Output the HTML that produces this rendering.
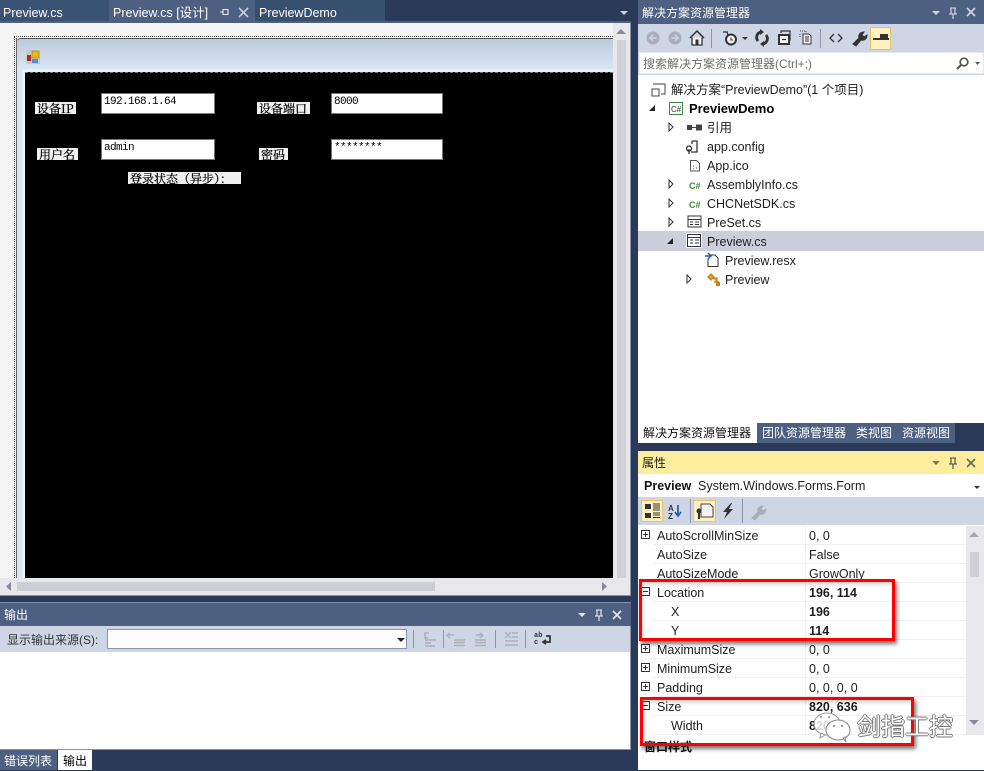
<!DOCTYPE html>
<html lang="zh">
<head>
<meta charset="utf-8">
<style>
html,body{margin:0;padding:0;background:#2b3a58;}
body{position:relative;width:984px;height:770px;overflow:hidden;font-family:"Liberation Sans","Noto Sans CJK SC",sans-serif;font-size:12.5px;color:#1e1e1e;}
.b{position:absolute;}
.t{position:absolute;white-space:nowrap;line-height:20px;height:20px;margin-top:1px;}
.w{color:#fff;}
.h{font-size:12px;}
.bold{font-weight:bold;}
.lb{position:absolute;background:#f0f0f0;color:#000;font:12px/14px "Noto Serif CJK SC","Liberation Serif",serif;height:12px;white-space:nowrap;overflow:hidden;padding-left:2px;box-sizing:border-box;-webkit-text-stroke:.25px #000;}
.tb{position:absolute;background:#fff;border:1px solid #777;box-sizing:border-box;height:21px;color:#000;font:11px/17px "Liberation Mono",monospace;letter-spacing:-.6px;padding-left:2px;}
.row{position:absolute;left:653px;width:313px;height:18px;border-bottom:1px solid #f0f0f0;}
.red{position:absolute;border:3px solid #f00;box-sizing:border-box;box-shadow:2px 3px 4px rgba(0,0,0,.55),inset 2px 3px 3px rgba(0,0,0,.14);}
svg{position:absolute;left:0;top:0;}
</style>
</head>
<body>
<!-- document tabs -->
<div class="b" style="left:0;top:0;width:109px;height:21px;background:#3a5274"></div>
<div class="b" style="left:109px;top:0;width:146px;height:23px;background:#4d6082"></div>
<div class="b" style="left:255px;top:0;width:130px;height:21px;background:#37506f"></div>
<div class="b" style="left:0;top:21px;width:631px;height:2px;background:#4d6082"></div>
<div class="t w" style="left:3px;top:2px">Preview.cs</div>
<div class="t w" style="left:113px;top:2px">Preview.cs [设计]</div>
<div class="t w" style="left:259px;top:2px">PreviewDemo</div>

<!-- designer -->
<div class="b" style="left:0;top:23px;width:631px;height:573px;background:#f5f5f5;border-right:1px solid #8092ad;box-sizing:border-box"></div>
<div class="b" style="left:14px;top:36px;width:599px;border-top:1px dotted #555"></div>
<div class="b" style="left:14px;top:36px;height:542px;border-left:1px dotted #555"></div>
<div class="b" style="left:16px;top:38px;width:597px;height:31px;border-top:1px solid #555;border-top-left-radius:5px;box-sizing:border-box;background:linear-gradient(#bccbda,#d9e6f3)"></div>
<div class="b" style="left:16px;top:38px;width:1px;height:540px;background:#666"></div>
<div class="b" style="left:17px;top:69px;width:596px;height:3px;background:#e9f1f9"></div>
<div class="b" style="left:17px;top:69px;width:8px;height:509px;background:#d9e6f3"></div>
<div class="b" style="left:23px;top:70px;width:2px;height:508px;background:#f2f7fb"></div>
<div class="b" style="left:25px;top:72px;width:588px;height:506px;background:#000;border-top:1px dashed #777;box-sizing:border-box"></div>

<div class="lb" style="left:35px;top:102px;width:41px">设备IP</div>
<div class="lb" style="left:257px;top:102px;width:53px">设备端口</div>
<div class="lb" style="left:37px;top:148px;width:41px">用户名</div>
<div class="lb" style="left:259px;top:148px;width:29px">密码</div>
<div class="lb" style="left:128px;top:172px;width:113px">登录状态（异步）：</div>
<div class="tb" style="left:101px;top:93px;width:114px">192.168.1.64</div>
<div class="tb" style="left:331px;top:93px;width:112px">8000</div>
<div class="tb" style="left:101px;top:139px;width:114px">admin</div>
<div class="tb" style="left:331px;top:139px;width:112px">********</div>

<!-- designer scrollbars -->
<div class="b" style="left:613px;top:23px;width:17px;height:573px;background:#e8e8ec"></div>
<div class="b" style="left:617px;top:40px;width:9px;height:538px;background:#d0d1d7"></div>
<div class="b" style="left:0;top:578px;width:630px;height:17px;background:#e8e8ec"></div>
<div class="b" style="left:17px;top:582px;width:418px;height:9px;background:#cdced3"></div>
<div class="b" style="left:0;top:595px;width:631px;height:1px;background:#8092ad"></div>

<!-- output panel -->
<div class="b" style="left:0;top:602px;width:631px;height:148px;background:#fff;border-right:1px solid #8092ad;box-sizing:border-box"></div>
<div class="b" style="left:0;top:602px;width:631px;height:24px;background:#4d6082;border-top:1px solid #8092ad;box-sizing:border-box"></div>
<div class="b" style="left:0;top:626px;width:630px;height:26px;background:#ced5e5"></div>
<div class="t w h" style="left:4px;top:604px">输出</div>
<div class="t h" style="left:7px;top:629px;color:#333">显示输出来源(S):</div>
<div class="b" style="left:107px;top:629px;width:300px;height:20px;background:#fdfdfd;border:1px solid #8a96ad;box-sizing:border-box"></div>
<div class="b" style="left:0;top:749px;width:631px;height:1px;background:#8092ad"></div>
<div class="b" style="left:0;top:750px;width:57px;height:20px;background:#4d6082"></div>
<div class="b" style="left:58px;top:750px;width:34px;height:20px;background:#fff"></div>
<div class="t w h" style="left:4px;top:750px">错误列表</div>
<div class="t h" style="left:63px;top:750px;color:#000">输出</div>

<!-- solution explorer -->
<div class="b" style="left:638px;top:0;width:346px;height:24px;background:#4d6082"></div>
<div class="t w h" style="left:642px;top:2px">解决方案资源管理器</div>
<div class="b" style="left:638px;top:24px;width:346px;height:28px;background:#ced5e5"></div>
<div class="b" style="left:638px;top:52px;width:346px;height:23px;background:#ced5e5"></div>
<div class="b" style="left:639px;top:52px;width:345px;height:22px;background:#fff;border:1px solid #e6e9f1;box-sizing:border-box"></div>
<div class="t h" style="left:643px;top:53px;color:#6e6e6e">搜索解决方案资源管理器(Ctrl+;)</div>
<div class="b" style="left:870px;top:27px;width:21px;height:23px;background:#fff0c0;border:1px solid #e5c365;box-sizing:border-box"></div>
<div class="b" style="left:638px;top:75px;width:346px;height:348px;background:#fff"></div>
<div class="b" style="left:638px;top:231px;width:346px;height:20px;background:#ccceDB"></div>
<div class="t" style="left:671px;top:79px">解决方案“PreviewDemo”(1 个项目)</div>
<div class="t bold" style="left:689px;top:98px;font-size:13px;color:#000">PreviewDemo</div>
<div class="t" style="left:707px;top:117px">引用</div>
<div class="t" style="left:707px;top:136px">app.config</div>
<div class="t" style="left:707px;top:155px">App.ico</div>
<div class="t" style="left:707px;top:174px">AssemblyInfo.cs</div>
<div class="t" style="left:707px;top:193px">CHCNetSDK.cs</div>
<div class="t" style="left:707px;top:212px">PreSet.cs</div>
<div class="t" style="left:707px;top:231px">Preview.cs</div>
<div class="t" style="left:725px;top:250px">Preview.resx</div>
<div class="t" style="left:725px;top:269px">Preview</div>

<!-- solution tabs -->
<div class="b" style="left:638px;top:423px;width:119px;height:20px;background:#fff"></div>
<div class="b" style="left:757px;top:423px;width:198px;height:20px;background:#4d6082"></div>
<div class="t h" style="left:643px;top:422px;color:#111">解决方案资源管理器</div>
<div class="t w h" style="left:762px;top:422px">团队资源管理器</div>
<div class="t w h" style="left:856px;top:422px">类视图</div>
<div class="t w h" style="left:902px;top:422px">资源视图</div>

<!-- properties -->
<div class="b" style="left:638px;top:451px;width:346px;height:23px;background:#fcee9e"></div>
<div class="t h" style="left:642px;top:452px;color:#222">属性</div>
<div class="b" style="left:638px;top:474px;width:346px;height:296px;background:#fff"></div>
<div class="t bold" style="left:644px;top:475px;color:#111">Preview</div>
<div class="t" style="left:698px;top:475px">System.Windows.Forms.Form</div>
<div class="b" style="left:638px;top:497px;width:346px;height:28px;background:#ced5e5"></div>
<div class="b" style="left:641px;top:500px;width:22px;height:22px;background:#fff0c0;border:1px solid #e5c365;box-sizing:border-box"></div>
<div class="b" style="left:693px;top:500px;width:23px;height:22px;background:#fff0c0;border:1px solid #e5c365;box-sizing:border-box"></div>

<div class="row" style="top:526px"></div>
<div class="row" style="top:545px"></div>
<div class="row" style="top:564px"></div>
<div class="row" style="top:583px"></div>
<div class="row" style="top:602px"></div>
<div class="row" style="top:621px"></div>
<div class="row" style="top:640px"></div>
<div class="row" style="top:659px"></div>
<div class="row" style="top:678px"></div>
<div class="row" style="top:697px"></div>
<div class="row" style="top:716px"></div>
<div class="b" style="left:805px;top:526px;width:1px;height:209px;background:#f0f0f0"></div>
<div class="b" style="left:966px;top:526px;width:18px;height:209px;background:#e8e8ec"></div>
<div class="b" style="left:970px;top:552px;width:9px;height:25px;background:#d0d1d7"></div>

<div class="t" style="left:657px;top:525px">AutoScrollMinSize</div><div class="t" style="left:809px;top:525px">0, 0</div>
<div class="t" style="left:657px;top:544px">AutoSize</div><div class="t" style="left:809px;top:544px">False</div>
<div class="t" style="left:657px;top:563px">AutoSizeMode</div><div class="t" style="left:809px;top:563px">GrowOnly</div>
<div class="t" style="left:657px;top:582px">Location</div><div class="t bold" style="left:809px;top:582px">196, 114</div>
<div class="t" style="left:671px;top:601px">X</div><div class="t bold" style="left:809px;top:601px">196</div>
<div class="t" style="left:671px;top:620px">Y</div><div class="t bold" style="left:809px;top:620px">114</div>
<div class="t" style="left:657px;top:639px">MaximumSize</div><div class="t" style="left:809px;top:639px">0, 0</div>
<div class="t" style="left:657px;top:658px">MinimumSize</div><div class="t" style="left:809px;top:658px">0, 0</div>
<div class="t" style="left:657px;top:677px">Padding</div><div class="t" style="left:809px;top:677px">0, 0, 0, 0</div>
<div class="t" style="left:657px;top:696px">Size</div><div class="t bold" style="left:809px;top:696px">820, 636</div>
<div class="t" style="left:671px;top:715px">Width</div><div class="t bold" style="left:809px;top:715px">820</div>
<div class="t bold h" style="left:644px;top:736px;color:#111">窗口样式</div>

<!-- icons -->
<svg width="984" height="770" viewBox="0 0 984 770">
  <!-- tab pin / close / overflow -->
  <path d="M220 12h3M223 9.500h5v5h-5zM223 9v6" stroke="#e8edf5" fill="none" stroke-width="1.100"/>
  <path d="M239 8l9 9M248 8l-9 9" stroke="#c3cbd9" stroke-width="1.700" fill="none"/>
  <path d="M620 11h8l-4 4z" fill="#cfd6e3"/>
  <!-- form icon -->
  <rect x="26" y="50" width="14" height="14" fill="#c9c9c9"/>
  <rect x="32" y="51" width="7" height="7" fill="#e9b914" stroke="#a07a10" stroke-width=".6"/>
  <rect x="27" y="55" width="4" height="6" fill="#b02a20"/>
  <rect x="32" y="59" width="6" height="4" fill="#4f8fd8"/>
  <!-- scroll arrows -->
  <path d="M621 29l-5 5h10z" fill="#868999"/>
  <path d="M11 582v9l-5-4.500z" fill="#868999"/>
  <path d="M602 582v9l5-4.500z" fill="#868999"/>
  <path d="M974 532l-5 5h10z" fill="#a5a7b3"/>
  <path d="M969 720h10l-5 5z" fill="#868999"/>

  <!-- window header buttons: solution -->
  <path d="M932 11h8l-4 4z" fill="#cfd6e3"/>
  <path d="M950 8h6M951 8v6h4v-6M949 14h8M953 14v5" stroke="#dbe1ec" fill="none" stroke-width="1.100"/>
  <path d="M967 8l8 8M975 8l-8 8" stroke="#cfd6e3" stroke-width="1.700" fill="none"/>
  <!-- output header -->
  <path d="M578 613h8l-4 4z" fill="#dfe4ee"/>
  <path d="M596 610h6M597 610v6h4v-6M595 616h8M599 616v5" stroke="#eef1f6" fill="none" stroke-width="1.100"/>
  <path d="M613 611l8 8M621 611l-8 8" stroke="#dfe4ee" stroke-width="1.700" fill="none"/>
  <!-- properties header -->
  <path d="M932 461h8l-4 4z" fill="#7f7a55"/>
  <path d="M950 458h6M951 458v6h4v-6M949 464h8M953 464v5" stroke="#4a4a40" fill="none" stroke-width="1.100"/>
  <path d="M967 459l8 8M975 459l-8 8" stroke="#6d6a55" stroke-width="1.700" fill="none"/>

  <!-- solution toolbar -->
  <circle cx="653" cy="38" r="6.500" fill="#a9aeba"/><path d="M656.500 38h-6M653 35l-3 3 3 3" stroke="#ced5e5" stroke-width="1.400" fill="none"/>
  <circle cx="675" cy="38" r="6.500" fill="#a9aeba"/><path d="M671.500 38h6M675 35l3 3-3 3" stroke="#ced5e5" stroke-width="1.400" fill="none"/>
  <path d="M690 38l7-7 7 7" stroke="#333" stroke-width="1.500" fill="none"/>
  <path d="M692 37.500v7.500h10v-7.500" stroke="#333" stroke-width="1.300" fill="#f5f5f5"/>
  <rect x="695.500" y="39.500" width="3" height="5.500" fill="#333"/>
  <rect x="711" y="29" width="1" height="19" fill="#8a96ad"/>
  <circle cx="731" cy="39.500" r="5" fill="#f3f3f3" stroke="#333" stroke-width="2"/>
  <path d="M731 37.500v2.500h2" stroke="#333" fill="none"/><path d="M723 32h5M727 32l1 3" stroke="#333" fill="none" stroke-width="1.200"/>
  <path d="M742 37h6l-3 3z" fill="#333"/>
  <path d="M758 41a5.500 5.500 0 0 1 3-9M766 35a5.500 5.500 0 0 1-3 9" stroke="#333" stroke-width="2.800" fill="none"/>
  <path d="M760 29l4 3-4 3zM764 41l-4 3 4 3z" fill="#333"/>
  <rect x="779" y="35" width="10" height="9" fill="#f4f5f7" stroke="#333" stroke-width="2"/>
  <path d="M781 33v-2h9v9h-1M782 39.500h4" stroke="#333" fill="none" stroke-width="1.200"/>
  <path d="M800 31h6v2M800 34v3" stroke="#444" stroke-dasharray="1 1" fill="none"/>
  <path d="M804 34h5l2 2v8h-8v-10zM805 37h4M805 39h4M805 41h4" stroke="#333" fill="#f4f5f7"/>
  <rect x="820" y="29" width="1" height="19" fill="#8a96ad"/>
  <path d="M834 34l-4 4 4 4M838 34l4 4-4 4" stroke="#333" stroke-width="1.300" fill="none"/>
  <path d="M853 44l6-6c-1-3 1-6 5-6l-2 3 2 2 3-2c0 4-3 6-6 5l-5 6z" fill="#333" stroke="#333"/>
  <rect x="873" y="38" width="16" height="2" fill="#333"/>
  <rect x="880" y="34" width="8" height="5" fill="#333"/>
  <!-- search icon -->
  <circle cx="964" cy="62" r="3.800" fill="none" stroke="#555" stroke-width="1.700"/><path d="M961 65l-4 4" stroke="#555" stroke-width="2.200"/>
  <path d="M975 62h5l-2.500 3z" fill="#555"/>

  <!-- tree -->
  <path d="M653 84h12v10h-4" stroke="#444" fill="none"/><rect x="652" y="89" width="7" height="7" fill="#fff" stroke="#444"/>
  <path d="M649 111l6-6v6z" fill="#222"/>
  <rect x="669.500" y="102.500" width="13" height="12" fill="#fff" stroke="#3e8a3e"/>
  <text x="671" y="112" font-family="Liberation Sans" font-size="8" fill="#333">C#</text>
  <g fill="#fff" stroke="#333">
    <path d="M669 123v8l4-4z"/><path d="M669 180v8l4-4z"/><path d="M669 199v8l4-4z"/><path d="M669 218v8l4-4z"/><path d="M687 275v8l4-4z"/>
  </g>
  <path d="M667 244l6-6v6z" fill="#222"/>
  <rect x="687" y="125" width="5" height="5" fill="#444"/><path d="M692 127.500h4" stroke="#444"/><rect x="696" y="124.500" width="6" height="6" fill="#444"/>
  <path d="M692 141h5v11h-6M692 141v3M689 146a2.500 2.500 0 1 0 .1 0zM689 149v5" stroke="#333" fill="none" stroke-width="1.300"/>
  <path d="M690.500 160.500h6l3 3v7.500h-9zM693 166h1M696 168h1M693 169h1" stroke="#555" fill="#fff"/>
  <text x="689" y="189" font-family="Liberation Sans" font-size="9" font-weight="bold" fill="#388a34">C#</text>
  <text x="689" y="208" font-family="Liberation Sans" font-size="9" font-weight="bold" fill="#388a34">C#</text>
  <g fill="#fff" stroke="#333">
    <rect x="688" y="216" width="13" height="11"/>
    <rect x="687.500" y="234.500" width="13" height="12" stroke="#fff" stroke-width="3"/>
    <rect x="687.500" y="234.500" width="13" height="12"/>
  </g>
  <path d="M688 219.500h13M690 222h3M695 222h4M690 224.500h3M695 224.500h4M688 237.500h13M690 240h3M695 240h4M690 243h3M695 243h4" stroke="#333" fill="none"/>
  <path d="M709 255h6l3 3v8.500h-10v-8" stroke="#333" fill="#fff"/>
  <path d="M705 256h6M708 253l3 3-3 3" stroke="#1c5fa8" stroke-width="1.400" fill="none"/>
  <path d="M710 275l-2 2 3 3 3-3-3-3zM713 278h4v6M714 282h5" stroke="#c77f1e" fill="#e5a53f" stroke-width="1.300"/><rect x="716" y="282" width="4" height="4" fill="#c77f1e"/>

  <!-- properties toolbar -->
  <g fill="#333"><rect x="645" y="504" width="6" height="5"/><rect x="645" y="513" width="6" height="5"/></g>
  <path d="M653 504h7M653 506h7M653 508h7M653 510h7M653 513h7M653 515h7M653 517.500h7" stroke="#333" fill="none"/>
  <text x="668" y="511" font-family="Liberation Sans" font-size="8" font-weight="bold" fill="#333">A</text>
  <text x="668" y="519" font-family="Liberation Sans" font-size="8" font-weight="bold" fill="#333">Z</text>
  <path d="M678 505v10M675 512l3 4 3-4" stroke="#1c5fa8" stroke-width="1.700" fill="none"/>
  <rect x="690" y="499" width="1" height="24" fill="#8a96ad"/>
  <path d="M701 504h9l3 3v10h-12z" fill="#f5f5f5" stroke="#444"/>
  <circle cx="699" cy="511" r="2.500" fill="#333"/><rect x="698" y="512" width="2" height="7" fill="#333"/>
  <path d="M731 503l-8 9h4l-3 7 9-10h-4l3-6z" fill="#333"/>
  <rect x="742" y="499" width="1" height="24" fill="#8a96ad"/>
  <path d="M752 518l6-6c-1-3 1-6 5-6l-2 3 2 2 3-2c0 4-3 6-6 5l-5 6z" fill="#a9aeba" stroke="#a9aeba"/>

  <!-- prop expanders -->
  <g fill="#fff" stroke="#333">
    <rect x="641.500" y="530.500" width="8" height="8"/>
    <rect x="641.500" y="644.500" width="8" height="8"/>
    <rect x="641.500" y="663.500" width="8" height="8"/>
    <rect x="641.500" y="682.500" width="8" height="8"/>
    <rect x="641.500" y="587.500" width="8" height="8"/>
    <rect x="641.500" y="701.500" width="8" height="8"/>
  </g>
  <path d="M643 534.500h5M645.500 532v5M643 648.500h5M645.500 646v5M643 667.500h5M645.500 665v5M643 686.500h5M645.500 684v5M643 591.500h5M643 705.500h5" stroke="#333" fill="none"/>
  <path d="M974 486h6l-3 3z" fill="#333"/>

  <!-- output toolbar -->
  <path d="M397 638h8l-4 4z" fill="#1e2a3c"/>
  <g fill="#8a96ad">
    <rect x="413" y="630" width="1" height="18"/><rect x="443" y="630" width="1" height="18"/><rect x="495" y="630" width="1" height="18"/><rect x="525" y="630" width="1" height="18"/>
  </g>
  <g stroke="#adb0b8" fill="none" stroke-width="1.500">
    <path d="M429 633h-4v5h3M425 638l2 3M425 640h11M425 643h6M425 646h10"/>
    <path d="M454 635h-6M450 633l-3 2.500 3 2.500M454 640h11M454 642.500h11M454 645.500h11"/>
    <path d="M476 635h6M480 633l3 2.500-3 2.500M475 640h11M475 642.500h11M475 645.500h11"/>
    <path d="M505 632l6 6M511 632l-6 6M512 633h6M512 637h6M505 641h13M505 645h13"/>
  </g>
  <text x="534" y="637" font-family="Liberation Mono" font-size="7" font-weight="bold" fill="#333">ab</text>
  <text x="534" y="644" font-family="Liberation Mono" font-size="7" font-weight="bold" fill="#333">c</text>
  <path d="M546 636h4v6h-7M546 640l-3 2 3 2" stroke="#333" stroke-width="1.700" fill="none"/>

  <!-- watermark bubbles -->
  <ellipse cx="827" cy="724" rx="13" ry="11" fill="#fff" fill-opacity=".82" stroke="#999"/>
  <path d="M821 733l-1 5 5-3z" fill="#fff" stroke="#999"/>
  <ellipse cx="838" cy="730" rx="12" ry="10" fill="#fff" stroke="#888"/>
  <path d="M843 738l3 4-1-5z" fill="#fff" stroke="#888"/>
  <circle cx="821" cy="717" r="1" fill="#888"/><circle cx="829" cy="717" r="1" fill="#888"/>
  <circle cx="834" cy="726" r="1" fill="#777"/><circle cx="842" cy="726" r="1" fill="#777"/>
</svg>

<div class="red" style="left:639px;top:579px;width:256px;height:62px"></div>
<div class="red" style="left:640px;top:697px;width:274px;height:49px"></div>

<div class="t" style="left:857px;top:715px;margin-top:0;height:26px;line-height:26px;font-size:24px;color:#fff;text-shadow:1px 0 0 #777,-1px 0 0 #777,0 1px 0 #777,0 -1px 0 #777">剑指工控</div>
</body>
</html>
